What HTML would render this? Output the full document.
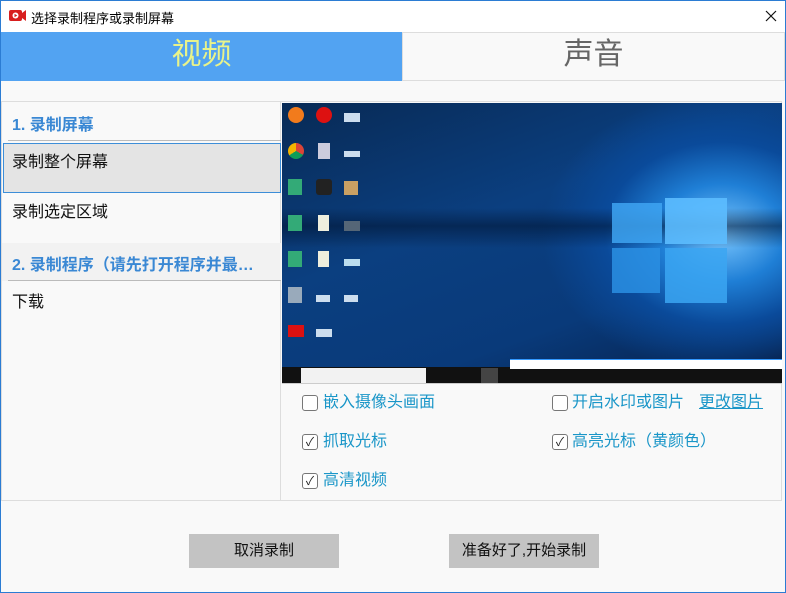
<!DOCTYPE html>
<html><head><meta charset="utf-8"><style>
*{margin:0;padding:0;box-sizing:border-box}
body{width:786px;height:593px;background:#f9f9f9;font-family:"Liberation Sans","Noto Sans CJK SC",sans-serif;position:relative;overflow:hidden}
.win{position:absolute;left:0;top:0;width:786px;height:593px;border:1px solid #2b7cd3}
.abs{position:absolute}
.title{left:0;top:0;width:784px;height:31px;background:#fff;font-size:13px;color:#000}
.cb{display:inline-block;width:16px;height:16px;border:1px solid #777;border-radius:3px;background:#fff;position:absolute;font-size:12px;line-height:14px;text-align:center;color:#222}
.chk{color:#1a96c8;font-size:16px;position:absolute;line-height:20px}
.lt{position:absolute;left:10px;font-size:16px;line-height:20px}
</style></head><body><div class="win">
<div class="abs title">
 <svg class="abs" style="left:8px;top:9px" width="17" height="11"><rect x="0" y="0" width="13" height="11" rx="2" fill="#d81e1e"/><polygon points="13,3 17,0 17,11 13,8" fill="#d81e1e"/><circle cx="6.5" cy="5.5" r="3" fill="#fff"/><polygon points="5.5,3.8 8.3,5.5 5.5,7.2" fill="#d81e1e"/></svg>
 <div class="abs" style="left:30px;top:7px">选择录制程序或录制屏幕</div>
 <svg class="abs" style="left:764px;top:9px" width="12" height="12"><path d="M1 1L11 11M11 1L1 11" stroke="#111" stroke-width="1.2"/></svg>
</div>
<div class="abs" style="left:0;top:31px;width:401px;height:49px;background:#52a3f2;color:#e9f38a;font-size:30px;text-align:center;line-height:45px">视频</div>
<div class="abs" style="left:401px;top:31px;width:383px;height:49px;background:#f9f9f9;border:1px solid #ddd;color:#666;font-size:30px;text-align:center;line-height:43px">声音</div>
<div class="abs" style="left:0;top:100px;width:781px;height:400px;border:1px solid #ddd;background:#f9f9f9"></div>
<div class="abs" style="left:1px;top:101px;width:279px;height:398px;border-right:1px solid #ddd">
 <div class="lt" style="top:14px;font-weight:bold;color:#3a88d4">1. 录制屏幕</div>
 <div class="abs" style="left:6px;top:38px;width:273px;height:1px;background:#bbb"></div>
 <div class="abs" style="left:1px;top:41px;width:278px;height:50px;background:#e4e4e4;border:1px solid #3d8ed8"></div>
 <div class="lt" style="top:51px;color:#111">录制整个屏幕</div>
 <div class="lt" style="top:101px;color:#111">录制选定区域</div>
 <div class="abs" style="left:0;top:141px;width:279px;height:38px;background:#f2f2f2"></div>
 <div class="lt" style="top:154px;font-weight:bold;color:#3a88d4;white-space:nowrap">2. 录制程序（请先打开程序并最…</div>
 <div class="abs" style="left:6px;top:178px;width:273px;height:1px;background:#bbb"></div>
 <div class="lt" style="top:191px;color:#111">下载</div>
</div>
<div class="abs" style="left:281px;top:102px;width:500px;height:280px;overflow:hidden;background:radial-gradient(ellipse 180px 140px at 440px 130px,#7cc8ff 0%,#1f7fd6 35%,#0a4a9a 65%,transparent 100%),linear-gradient(160deg,#082a55 0%,#0b3f80 40%,#093a7a 70%,#061d44 100%)">
 <div class="abs" style="left:0;top:105px;width:500px;height:40px;background:linear-gradient(180deg,transparent,rgba(0,20,50,.55) 45%,transparent);"></div>
 <div class="abs" style="left:330px;top:100px;width:50px;height:40px;background:#3ea4f2;opacity:.85"></div>
 <div class="abs" style="left:383px;top:95px;width:62px;height:46px;background:#5cbcff;opacity:.9"></div>
 <div class="abs" style="left:330px;top:145px;width:48px;height:45px;background:#2a8fe3;opacity:.85"></div>
 <div class="abs" style="left:383px;top:145px;width:62px;height:55px;background:#3ba6f2;opacity:.85"></div>
 <div class="abs" style="left:6px;top:4px;width:16px;height:16px;border-radius:50%;background:#f27b1c"></div>
 <div class="abs" style="left:34px;top:4px;width:16px;height:16px;border-radius:50%;background:#d11"></div>
 <div class="abs" style="left:62px;top:10px;width:16px;height:9px;background:#cde"></div>
 <div class="abs" style="left:6px;top:40px;width:16px;height:16px;border-radius:50%;background:conic-gradient(#db4437 0 33%,#0f9d58 0 66%,#f4b400 0)"></div>
 <div class="abs" style="left:36px;top:40px;width:12px;height:16px;background:#ccd"></div>
 <div class="abs" style="left:62px;top:48px;width:16px;height:6px;background:#cde"></div>
 <div class="abs" style="left:6px;top:76px;width:14px;height:16px;background:#3a7;"></div>
 <div class="abs" style="left:34px;top:76px;width:16px;height:16px;background:#222;border-radius:3px"></div>
 <div class="abs" style="left:62px;top:78px;width:14px;height:14px;background:#c9a063"></div>
 <div class="abs" style="left:6px;top:112px;width:14px;height:16px;background:#3a7"></div>
 <div class="abs" style="left:36px;top:112px;width:11px;height:16px;background:#eed"></div>
 <div class="abs" style="left:62px;top:118px;width:16px;height:10px;background:#567"></div>
 <div class="abs" style="left:6px;top:148px;width:14px;height:16px;background:#3a7"></div>
 <div class="abs" style="left:36px;top:148px;width:11px;height:16px;background:#eed"></div>
 <div class="abs" style="left:62px;top:156px;width:16px;height:7px;background:#bde"></div>
 <div class="abs" style="left:6px;top:184px;width:14px;height:16px;background:#9ab"></div>
 <div class="abs" style="left:34px;top:192px;width:14px;height:7px;background:#cde"></div>
 <div class="abs" style="left:62px;top:192px;width:14px;height:7px;background:#cde"></div>
 <div class="abs" style="left:6px;top:222px;width:16px;height:12px;background:#d11"></div>
 <div class="abs" style="left:34px;top:226px;width:16px;height:8px;background:#cde"></div>
 <div class="abs" style="left:0;top:264px;width:500px;height:16px;background:#111"></div>
 <div class="abs" style="left:19px;top:265px;width:125px;height:15px;background:#f2f2f2"></div>
 <div class="abs" style="left:228px;top:256px;width:272px;height:10px;background:#fff;border-top:1px solid #39f"></div>
 <div class="abs" style="left:199px;top:265px;width:17px;height:15px;background:#444"></div>
</div>
<div class="abs" style="left:281px;top:382px;width:500px;height:1px;background:#ccc"></div>
<div class="cb" style="left:301px;top:394px"></div><div class="chk" style="left:322px;top:392px">嵌入摄像头画面</div>
<div class="cb" style="left:551px;top:394px"></div><div class="chk" style="left:571px;top:392px">开启水印或图片</div>
<div class="chk" style="left:698px;top:392px;text-decoration:underline">更改图片</div>
<div class="cb" style="left:301px;top:433px">✓</div><div class="chk" style="left:322px;top:431px">抓取光标</div>
<div class="cb" style="left:551px;top:433px">✓</div><div class="chk" style="left:571px;top:431px">高亮光标（黄颜色）</div>
<div class="cb" style="left:301px;top:472px">✓</div><div class="chk" style="left:322px;top:470px">高清视频</div>
<div class="abs" style="left:188px;top:533px;width:150px;height:34px;background:#c3c3c3;font-size:15px;text-align:center;line-height:34px;color:#111">取消录制</div>
<div class="abs" style="left:448px;top:533px;width:150px;height:34px;background:#c3c3c3;font-size:15px;text-align:center;line-height:34px;color:#111">准备好了,开始录制</div>
</div></body></html>
